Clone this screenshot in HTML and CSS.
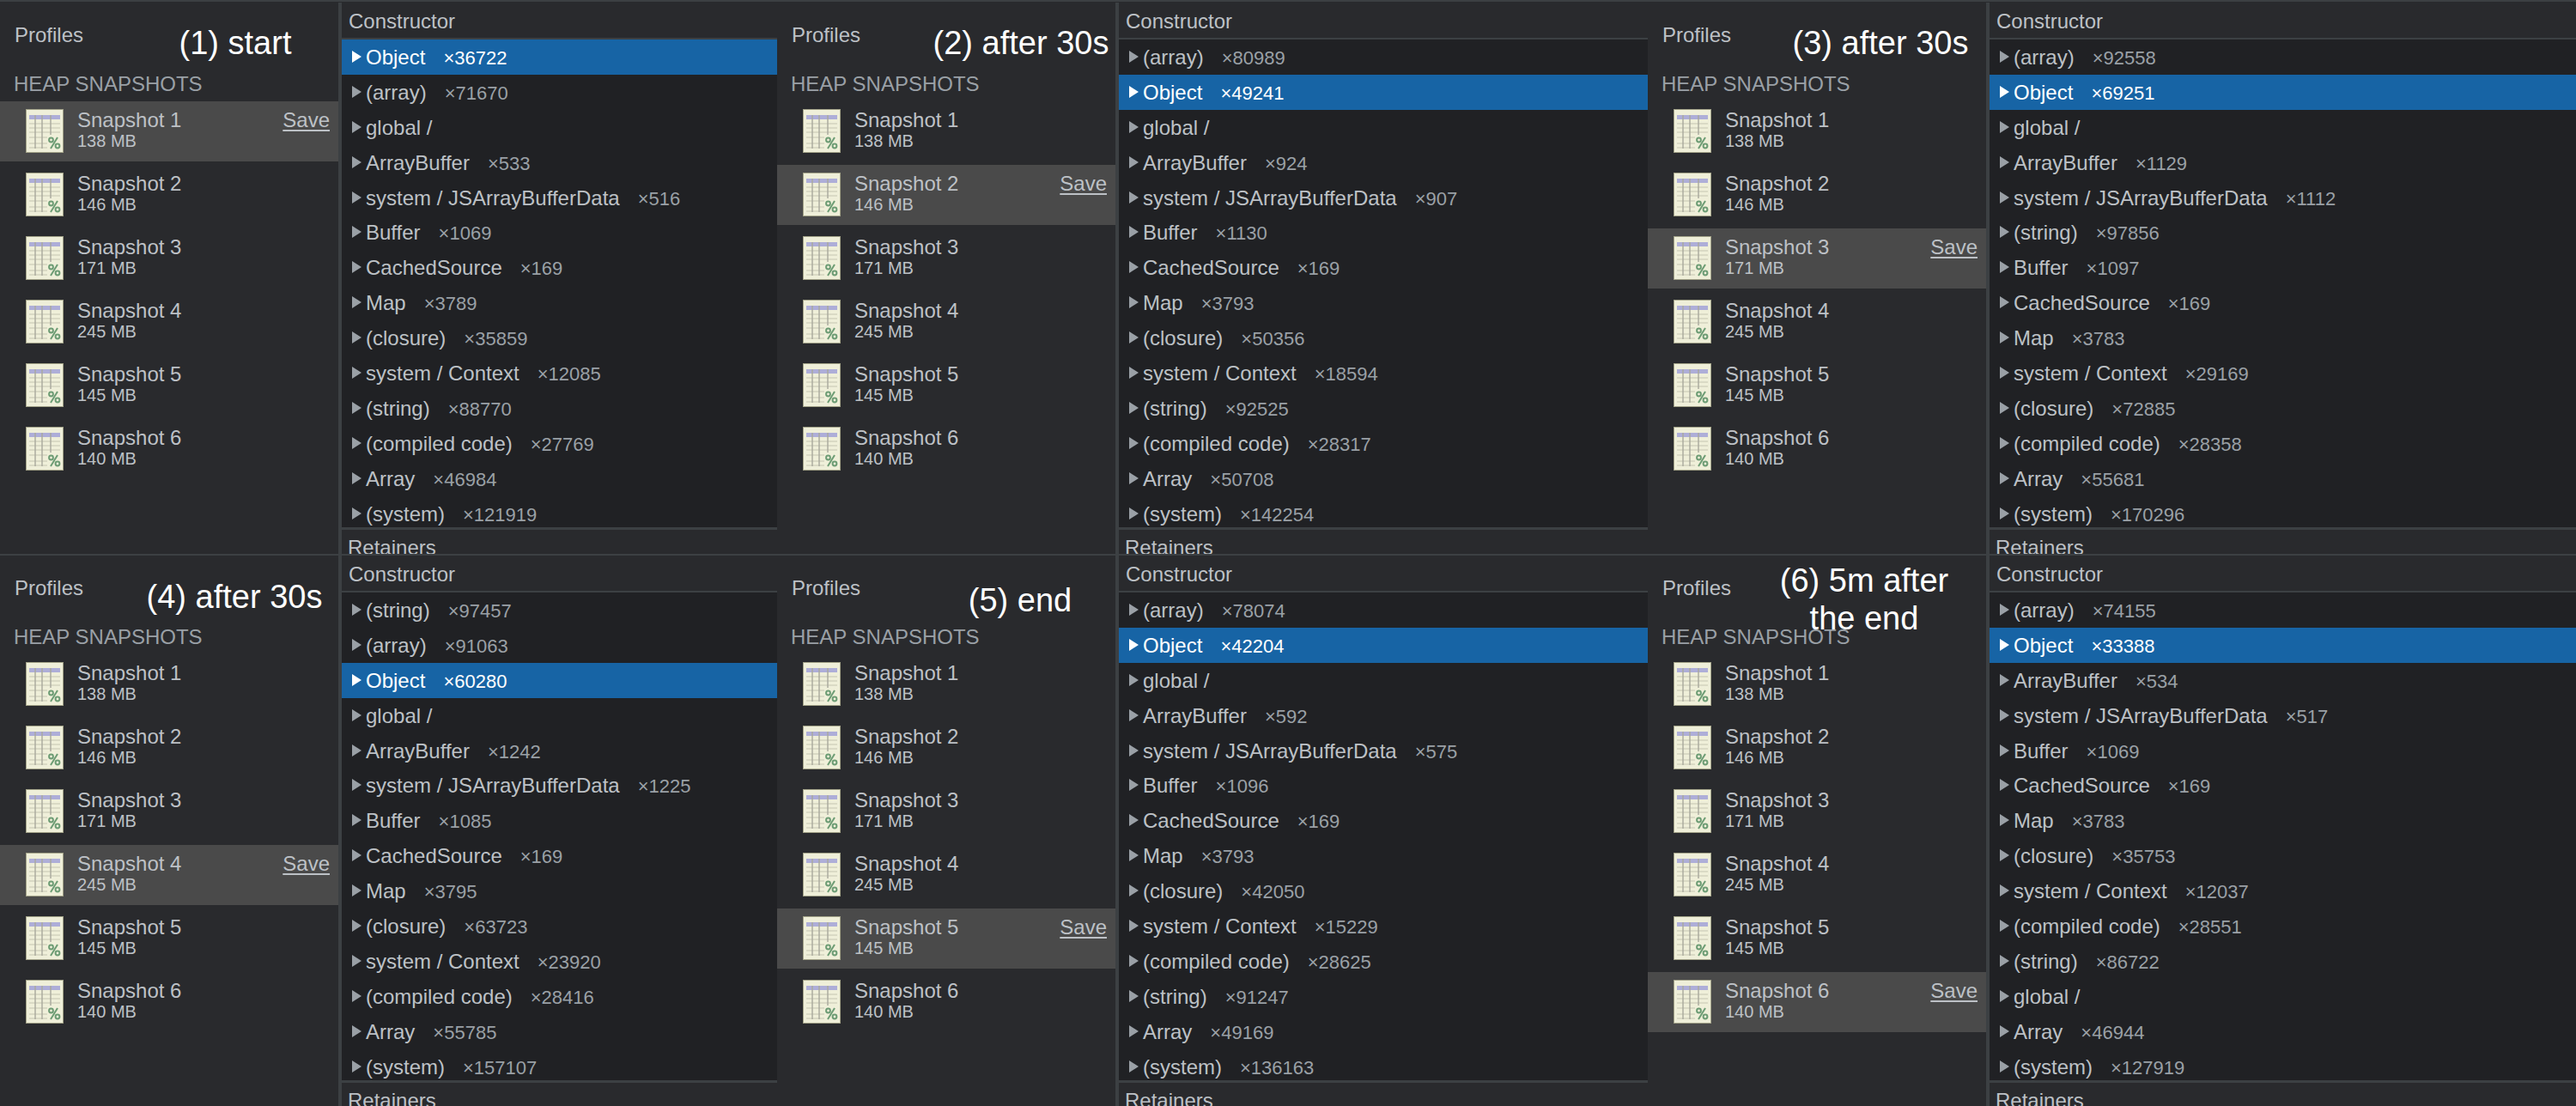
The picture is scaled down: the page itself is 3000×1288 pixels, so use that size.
FILE: index.html
```html
<!DOCTYPE html>
<html lang="en">
<head>
<meta charset="utf-8">
<title>Heap snapshots</title>
<link rel="stylesheet" href="styles.css">
</head>
<body>
<svg class="defs" width="0" height="0" aria-hidden="true">
  <symbol id="snap" viewBox="0 0 44 51">
    <rect x="0.5" y="0.5" width="43" height="50" fill="#efefd9" stroke="#a3a389"/>
    <rect x="4" y="7" width="36" height="5" fill="#aeaed8"/>
    <g stroke="#c6c6b2" stroke-width="1.2">
      <path d="M4 17H40M4 22H40M4 27H40M4 33H25M4 40H25M4 45H25"/>
    </g>
    <g stroke="#a9a99c" stroke-width="1.4">
      <path d="M11 7V46M19 7V46M29 7V30"/>
    </g>
    <g stroke="#6d9c74" fill="none" stroke-width="2">
      <circle cx="29.5" cy="36" r="2.4"/>
      <circle cx="37" cy="43" r="2.4"/>
      <path d="M37 33L29 46"/>
    </g>
  </symbol>
</svg>
<main class="board">

<section class="panel top">
  <aside class="side">
    <div class="note note-1">(1) start</div>
    <div class="title">Profiles</div>
    <div class="group">HEAP SNAPSHOTS</div>
    <ul class="snaps">
      <li class="snap on"><svg class="ico"><use href="#snap"/></svg><div class="info"><div class="sname">Snapshot 1</div><div class="ssize">138 MB</div></div><a class="save">Save</a></li>
      <li class="snap"><svg class="ico"><use href="#snap"/></svg><div class="info"><div class="sname">Snapshot 2</div><div class="ssize">146 MB</div></div></li>
      <li class="snap"><svg class="ico"><use href="#snap"/></svg><div class="info"><div class="sname">Snapshot 3</div><div class="ssize">171 MB</div></div></li>
      <li class="snap"><svg class="ico"><use href="#snap"/></svg><div class="info"><div class="sname">Snapshot 4</div><div class="ssize">245 MB</div></div></li>
      <li class="snap"><svg class="ico"><use href="#snap"/></svg><div class="info"><div class="sname">Snapshot 5</div><div class="ssize">145 MB</div></div></li>
      <li class="snap"><svg class="ico"><use href="#snap"/></svg><div class="info"><div class="sname">Snapshot 6</div><div class="ssize">140 MB</div></div></li>
    </ul>
  </aside>
  <div class="content">
    <div class="head">Constructor</div>
    <ul class="rows">
      <li class="row on"><i class="tri"></i><span class="name">Object</span><span class="count">×36722</span></li>
      <li class="row"><i class="tri"></i><span class="name">(array)</span><span class="count">×71670</span></li>
      <li class="row"><i class="tri"></i><span class="name">global /</span></li>
      <li class="row"><i class="tri"></i><span class="name">ArrayBuffer</span><span class="count">×533</span></li>
      <li class="row"><i class="tri"></i><span class="name">system / JSArrayBufferData</span><span class="count">×516</span></li>
      <li class="row"><i class="tri"></i><span class="name">Buffer</span><span class="count">×1069</span></li>
      <li class="row"><i class="tri"></i><span class="name">CachedSource</span><span class="count">×169</span></li>
      <li class="row"><i class="tri"></i><span class="name">Map</span><span class="count">×3789</span></li>
      <li class="row"><i class="tri"></i><span class="name">(closure)</span><span class="count">×35859</span></li>
      <li class="row"><i class="tri"></i><span class="name">system / Context</span><span class="count">×12085</span></li>
      <li class="row"><i class="tri"></i><span class="name">(string)</span><span class="count">×88770</span></li>
      <li class="row"><i class="tri"></i><span class="name">(compiled code)</span><span class="count">×27769</span></li>
      <li class="row"><i class="tri"></i><span class="name">Array</span><span class="count">×46984</span></li>
      <li class="row"><i class="tri"></i><span class="name">(system)</span><span class="count">×121919</span></li>
    </ul>
    <div class="retain">Retainers</div>
  </div>
</section>

<section class="panel top">
  <aside class="side">
    <div class="note note-2">(2) after 30s</div>
    <div class="title">Profiles</div>
    <div class="group">HEAP SNAPSHOTS</div>
    <ul class="snaps">
      <li class="snap"><svg class="ico"><use href="#snap"/></svg><div class="info"><div class="sname">Snapshot 1</div><div class="ssize">138 MB</div></div></li>
      <li class="snap on"><svg class="ico"><use href="#snap"/></svg><div class="info"><div class="sname">Snapshot 2</div><div class="ssize">146 MB</div></div><a class="save">Save</a></li>
      <li class="snap"><svg class="ico"><use href="#snap"/></svg><div class="info"><div class="sname">Snapshot 3</div><div class="ssize">171 MB</div></div></li>
      <li class="snap"><svg class="ico"><use href="#snap"/></svg><div class="info"><div class="sname">Snapshot 4</div><div class="ssize">245 MB</div></div></li>
      <li class="snap"><svg class="ico"><use href="#snap"/></svg><div class="info"><div class="sname">Snapshot 5</div><div class="ssize">145 MB</div></div></li>
      <li class="snap"><svg class="ico"><use href="#snap"/></svg><div class="info"><div class="sname">Snapshot 6</div><div class="ssize">140 MB</div></div></li>
    </ul>
  </aside>
  <div class="content">
    <div class="head">Constructor</div>
    <ul class="rows">
      <li class="row"><i class="tri"></i><span class="name">(array)</span><span class="count">×80989</span></li>
      <li class="row on"><i class="tri"></i><span class="name">Object</span><span class="count">×49241</span></li>
      <li class="row"><i class="tri"></i><span class="name">global /</span></li>
      <li class="row"><i class="tri"></i><span class="name">ArrayBuffer</span><span class="count">×924</span></li>
      <li class="row"><i class="tri"></i><span class="name">system / JSArrayBufferData</span><span class="count">×907</span></li>
      <li class="row"><i class="tri"></i><span class="name">Buffer</span><span class="count">×1130</span></li>
      <li class="row"><i class="tri"></i><span class="name">CachedSource</span><span class="count">×169</span></li>
      <li class="row"><i class="tri"></i><span class="name">Map</span><span class="count">×3793</span></li>
      <li class="row"><i class="tri"></i><span class="name">(closure)</span><span class="count">×50356</span></li>
      <li class="row"><i class="tri"></i><span class="name">system / Context</span><span class="count">×18594</span></li>
      <li class="row"><i class="tri"></i><span class="name">(string)</span><span class="count">×92525</span></li>
      <li class="row"><i class="tri"></i><span class="name">(compiled code)</span><span class="count">×28317</span></li>
      <li class="row"><i class="tri"></i><span class="name">Array</span><span class="count">×50708</span></li>
      <li class="row"><i class="tri"></i><span class="name">(system)</span><span class="count">×142254</span></li>
    </ul>
    <div class="retain">Retainers</div>
  </div>
</section>

<section class="panel top">
  <aside class="side">
    <div class="note note-3">(3) after 30s</div>
    <div class="title">Profiles</div>
    <div class="group">HEAP SNAPSHOTS</div>
    <ul class="snaps">
      <li class="snap"><svg class="ico"><use href="#snap"/></svg><div class="info"><div class="sname">Snapshot 1</div><div class="ssize">138 MB</div></div></li>
      <li class="snap"><svg class="ico"><use href="#snap"/></svg><div class="info"><div class="sname">Snapshot 2</div><div class="ssize">146 MB</div></div></li>
      <li class="snap on"><svg class="ico"><use href="#snap"/></svg><div class="info"><div class="sname">Snapshot 3</div><div class="ssize">171 MB</div></div><a class="save">Save</a></li>
      <li class="snap"><svg class="ico"><use href="#snap"/></svg><div class="info"><div class="sname">Snapshot 4</div><div class="ssize">245 MB</div></div></li>
      <li class="snap"><svg class="ico"><use href="#snap"/></svg><div class="info"><div class="sname">Snapshot 5</div><div class="ssize">145 MB</div></div></li>
      <li class="snap"><svg class="ico"><use href="#snap"/></svg><div class="info"><div class="sname">Snapshot 6</div><div class="ssize">140 MB</div></div></li>
    </ul>
  </aside>
  <div class="content">
    <div class="head">Constructor</div>
    <ul class="rows">
      <li class="row"><i class="tri"></i><span class="name">(array)</span><span class="count">×92558</span></li>
      <li class="row on"><i class="tri"></i><span class="name">Object</span><span class="count">×69251</span></li>
      <li class="row"><i class="tri"></i><span class="name">global /</span></li>
      <li class="row"><i class="tri"></i><span class="name">ArrayBuffer</span><span class="count">×1129</span></li>
      <li class="row"><i class="tri"></i><span class="name">system / JSArrayBufferData</span><span class="count">×1112</span></li>
      <li class="row"><i class="tri"></i><span class="name">(string)</span><span class="count">×97856</span></li>
      <li class="row"><i class="tri"></i><span class="name">Buffer</span><span class="count">×1097</span></li>
      <li class="row"><i class="tri"></i><span class="name">CachedSource</span><span class="count">×169</span></li>
      <li class="row"><i class="tri"></i><span class="name">Map</span><span class="count">×3783</span></li>
      <li class="row"><i class="tri"></i><span class="name">system / Context</span><span class="count">×29169</span></li>
      <li class="row"><i class="tri"></i><span class="name">(closure)</span><span class="count">×72885</span></li>
      <li class="row"><i class="tri"></i><span class="name">(compiled code)</span><span class="count">×28358</span></li>
      <li class="row"><i class="tri"></i><span class="name">Array</span><span class="count">×55681</span></li>
      <li class="row"><i class="tri"></i><span class="name">(system)</span><span class="count">×170296</span></li>
    </ul>
    <div class="retain">Retainers</div>
  </div>
</section>

<section class="panel">
  <aside class="side">
    <div class="note note-4">(4) after 30s</div>
    <div class="title">Profiles</div>
    <div class="group">HEAP SNAPSHOTS</div>
    <ul class="snaps">
      <li class="snap"><svg class="ico"><use href="#snap"/></svg><div class="info"><div class="sname">Snapshot 1</div><div class="ssize">138 MB</div></div></li>
      <li class="snap"><svg class="ico"><use href="#snap"/></svg><div class="info"><div class="sname">Snapshot 2</div><div class="ssize">146 MB</div></div></li>
      <li class="snap"><svg class="ico"><use href="#snap"/></svg><div class="info"><div class="sname">Snapshot 3</div><div class="ssize">171 MB</div></div></li>
      <li class="snap on"><svg class="ico"><use href="#snap"/></svg><div class="info"><div class="sname">Snapshot 4</div><div class="ssize">245 MB</div></div><a class="save">Save</a></li>
      <li class="snap"><svg class="ico"><use href="#snap"/></svg><div class="info"><div class="sname">Snapshot 5</div><div class="ssize">145 MB</div></div></li>
      <li class="snap"><svg class="ico"><use href="#snap"/></svg><div class="info"><div class="sname">Snapshot 6</div><div class="ssize">140 MB</div></div></li>
    </ul>
  </aside>
  <div class="content">
    <div class="head">Constructor</div>
    <ul class="rows">
      <li class="row"><i class="tri"></i><span class="name">(string)</span><span class="count">×97457</span></li>
      <li class="row"><i class="tri"></i><span class="name">(array)</span><span class="count">×91063</span></li>
      <li class="row on"><i class="tri"></i><span class="name">Object</span><span class="count">×60280</span></li>
      <li class="row"><i class="tri"></i><span class="name">global /</span></li>
      <li class="row"><i class="tri"></i><span class="name">ArrayBuffer</span><span class="count">×1242</span></li>
      <li class="row"><i class="tri"></i><span class="name">system / JSArrayBufferData</span><span class="count">×1225</span></li>
      <li class="row"><i class="tri"></i><span class="name">Buffer</span><span class="count">×1085</span></li>
      <li class="row"><i class="tri"></i><span class="name">CachedSource</span><span class="count">×169</span></li>
      <li class="row"><i class="tri"></i><span class="name">Map</span><span class="count">×3795</span></li>
      <li class="row"><i class="tri"></i><span class="name">(closure)</span><span class="count">×63723</span></li>
      <li class="row"><i class="tri"></i><span class="name">system / Context</span><span class="count">×23920</span></li>
      <li class="row"><i class="tri"></i><span class="name">(compiled code)</span><span class="count">×28416</span></li>
      <li class="row"><i class="tri"></i><span class="name">Array</span><span class="count">×55785</span></li>
      <li class="row"><i class="tri"></i><span class="name">(system)</span><span class="count">×157107</span></li>
    </ul>
    <div class="retain">Retainers</div>
  </div>
</section>

<section class="panel">
  <aside class="side">
    <div class="note note-5">(5) end</div>
    <div class="title">Profiles</div>
    <div class="group">HEAP SNAPSHOTS</div>
    <ul class="snaps">
      <li class="snap"><svg class="ico"><use href="#snap"/></svg><div class="info"><div class="sname">Snapshot 1</div><div class="ssize">138 MB</div></div></li>
      <li class="snap"><svg class="ico"><use href="#snap"/></svg><div class="info"><div class="sname">Snapshot 2</div><div class="ssize">146 MB</div></div></li>
      <li class="snap"><svg class="ico"><use href="#snap"/></svg><div class="info"><div class="sname">Snapshot 3</div><div class="ssize">171 MB</div></div></li>
      <li class="snap"><svg class="ico"><use href="#snap"/></svg><div class="info"><div class="sname">Snapshot 4</div><div class="ssize">245 MB</div></div></li>
      <li class="snap on"><svg class="ico"><use href="#snap"/></svg><div class="info"><div class="sname">Snapshot 5</div><div class="ssize">145 MB</div></div><a class="save">Save</a></li>
      <li class="snap"><svg class="ico"><use href="#snap"/></svg><div class="info"><div class="sname">Snapshot 6</div><div class="ssize">140 MB</div></div></li>
    </ul>
  </aside>
  <div class="content">
    <div class="head">Constructor</div>
    <ul class="rows">
      <li class="row"><i class="tri"></i><span class="name">(array)</span><span class="count">×78074</span></li>
      <li class="row on"><i class="tri"></i><span class="name">Object</span><span class="count">×42204</span></li>
      <li class="row"><i class="tri"></i><span class="name">global /</span></li>
      <li class="row"><i class="tri"></i><span class="name">ArrayBuffer</span><span class="count">×592</span></li>
      <li class="row"><i class="tri"></i><span class="name">system / JSArrayBufferData</span><span class="count">×575</span></li>
      <li class="row"><i class="tri"></i><span class="name">Buffer</span><span class="count">×1096</span></li>
      <li class="row"><i class="tri"></i><span class="name">CachedSource</span><span class="count">×169</span></li>
      <li class="row"><i class="tri"></i><span class="name">Map</span><span class="count">×3793</span></li>
      <li class="row"><i class="tri"></i><span class="name">(closure)</span><span class="count">×42050</span></li>
      <li class="row"><i class="tri"></i><span class="name">system / Context</span><span class="count">×15229</span></li>
      <li class="row"><i class="tri"></i><span class="name">(compiled code)</span><span class="count">×28625</span></li>
      <li class="row"><i class="tri"></i><span class="name">(string)</span><span class="count">×91247</span></li>
      <li class="row"><i class="tri"></i><span class="name">Array</span><span class="count">×49169</span></li>
      <li class="row"><i class="tri"></i><span class="name">(system)</span><span class="count">×136163</span></li>
    </ul>
    <div class="retain">Retainers</div>
  </div>
</section>

<section class="panel">
  <aside class="side">
    <div class="note note-6">(6) 5m after<br>the end</div>
    <div class="title">Profiles</div>
    <div class="group">HEAP SNAPSHOTS</div>
    <ul class="snaps">
      <li class="snap"><svg class="ico"><use href="#snap"/></svg><div class="info"><div class="sname">Snapshot 1</div><div class="ssize">138 MB</div></div></li>
      <li class="snap"><svg class="ico"><use href="#snap"/></svg><div class="info"><div class="sname">Snapshot 2</div><div class="ssize">146 MB</div></div></li>
      <li class="snap"><svg class="ico"><use href="#snap"/></svg><div class="info"><div class="sname">Snapshot 3</div><div class="ssize">171 MB</div></div></li>
      <li class="snap"><svg class="ico"><use href="#snap"/></svg><div class="info"><div class="sname">Snapshot 4</div><div class="ssize">245 MB</div></div></li>
      <li class="snap"><svg class="ico"><use href="#snap"/></svg><div class="info"><div class="sname">Snapshot 5</div><div class="ssize">145 MB</div></div></li>
      <li class="snap on"><svg class="ico"><use href="#snap"/></svg><div class="info"><div class="sname">Snapshot 6</div><div class="ssize">140 MB</div></div><a class="save">Save</a></li>
    </ul>
  </aside>
  <div class="content">
    <div class="head">Constructor</div>
    <ul class="rows">
      <li class="row"><i class="tri"></i><span class="name">(array)</span><span class="count">×74155</span></li>
      <li class="row on"><i class="tri"></i><span class="name">Object</span><span class="count">×33388</span></li>
      <li class="row"><i class="tri"></i><span class="name">ArrayBuffer</span><span class="count">×534</span></li>
      <li class="row"><i class="tri"></i><span class="name">system / JSArrayBufferData</span><span class="count">×517</span></li>
      <li class="row"><i class="tri"></i><span class="name">Buffer</span><span class="count">×1069</span></li>
      <li class="row"><i class="tri"></i><span class="name">CachedSource</span><span class="count">×169</span></li>
      <li class="row"><i class="tri"></i><span class="name">Map</span><span class="count">×3783</span></li>
      <li class="row"><i class="tri"></i><span class="name">(closure)</span><span class="count">×35753</span></li>
      <li class="row"><i class="tri"></i><span class="name">system / Context</span><span class="count">×12037</span></li>
      <li class="row"><i class="tri"></i><span class="name">(compiled code)</span><span class="count">×28551</span></li>
      <li class="row"><i class="tri"></i><span class="name">(string)</span><span class="count">×86722</span></li>
      <li class="row"><i class="tri"></i><span class="name">global /</span></li>
      <li class="row"><i class="tri"></i><span class="name">Array</span><span class="count">×46944</span></li>
      <li class="row"><i class="tri"></i><span class="name">(system)</span><span class="count">×127919</span></li>
    </ul>
    <div class="retain">Retainers</div>
  </div>
</section>

</main>
</body>
</html>
```

FILE: styles.css
```css
* { box-sizing: border-box; }
html, body { margin: 0; padding: 0; }
body {
  width: 3000px;
  height: 1288px;
  overflow: hidden;
  background: #292a2d;
  color: #bdc1c6;
  font-family: "Liberation Sans", Arial, sans-serif;
  font-size: 24px;
}
ul { list-style: none; margin: 0; padding: 0; }
.defs { position: absolute; }

.board {
  display: grid;
  grid-template-columns: 905px 1014px 1081px;
  grid-template-rows: 647px 641px;
  height: 1288px;
}
.panel {
  display: flex;
  min-width: 0;
  min-height: 0;
  overflow: hidden;
}
.panel.top {
  border-top: 2px solid #3c4043;
  border-bottom: 2px solid #3c4043;
  padding-top: 1px;
}

.side {
  position: relative;
  flex: 0 0 394px;
  padding-top: 24px;
  background: #292a2d;
}
.title {
  padding-left: 17px;
  line-height: 28px;
}
.group {
  margin-top: 29px;
  padding-left: 16px;
  line-height: 28px;
  color: #9aa0a6;
}
.snaps {
  display: flex;
  flex-direction: column;
  gap: 4px;
  margin-top: 6px;
}
.snap {
  display: flex;
  height: 70px;
  padding: 9px 10px 0 30px;
}
.snap.on { background: #4a4a4a; }
.ico {
  flex: none;
  width: 44px;
  height: 51px;
  filter: blur(0.7px);
}
.info { flex: 1; margin-left: 16px; }
.sname { line-height: 26px; }
.ssize { font-size: 20px; line-height: 22px; }
.save {
  line-height: 26px;
  text-decoration: underline;
  text-underline-offset: 3px;
}

.note {
  position: absolute;
  top: 25px;
  width: 400px;
  color: #fff;
  font-size: 38px;
  line-height: 44px;
  text-align: center;
  white-space: nowrap;
}
.note-1 { left: 74px; }
.note-2 { left: 84px; }
.note-3 { left: 71px; }
.note-4 { left: 73px; top: 26px; }
.note-5 { left: 83px; top: 30px; }
.note-6 { left: 52px; top: 7px; }

.content {
  flex: 1;
  min-width: 0;
  display: flex;
  flex-direction: column;
  border-left: 4px solid #3c4043;
  overflow: hidden;
}
.head {
  flex: none;
  height: 43px;
  padding: 1px 0 0 8px;
  line-height: 41px;
  border-bottom: 2px solid #3c4043;
}
.rows {
  flex: none;
  height: 568px;
  overflow: hidden;
  background: #202124;
}
.row {
  display: flex;
  align-items: baseline;
  height: 40.9px;
  padding-left: 12px;
  line-height: 41px;
}
.row.on { background: #1764a5; color: #fff; }
.tri {
  align-self: flex-start;
  flex: none;
  width: 0;
  height: 0;
  margin-top: 13px;
  border-style: solid;
  border-width: 7px 0 7px 11px;
  border-color: transparent transparent transparent #9aa0a6;
}
.row.on .tri { border-left-color: #fff; }
.name { margin-left: 5px; }
.count {
  margin-left: 21px;
  font-size: 22px;
  color: #9aa0a6;
}
.row.on .count { color: #fff; }
.retain {
  flex: 1;
  min-height: 0;
  overflow: hidden;
  border-top: 3px solid #3c4043;
  padding: 7px 0 0 7px;
  line-height: 28px;
}
```
